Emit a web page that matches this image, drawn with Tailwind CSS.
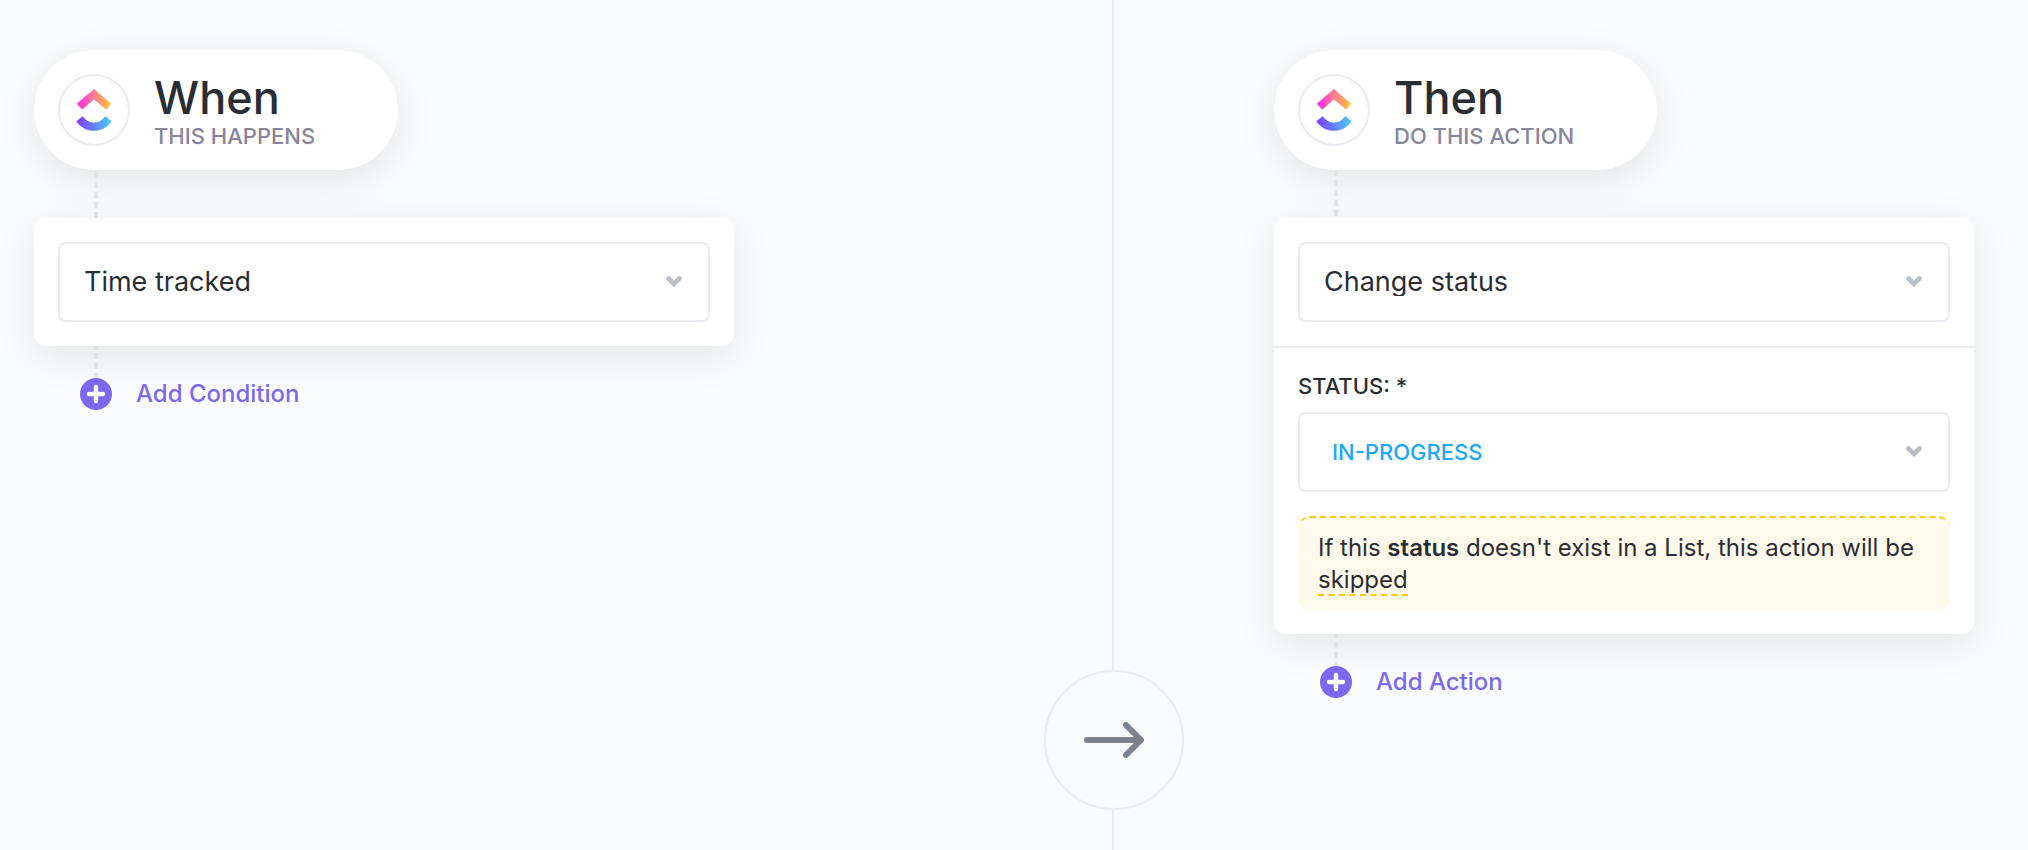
<!DOCTYPE html>
<html lang="en">
<head>
<meta charset="utf-8">
<title>Automation</title>
<script src="https://cdn.jsdelivr.net/npm/@tailwindcss/browser@4"></script>
</head>
<body class="bg-[#fafbfd] font-['Inter',sans-serif] text-[#292d34]">
<svg class="hidden" aria-hidden="true">
  <symbol id="chevron" viewBox="0 0 16 12"><path d="M2.5 2.5 8 8l5.500-5.500" fill="none" stroke="currentColor" stroke-width="4.600" stroke-linecap="round"/></symbol>
  <symbol id="plus" viewBox="0 0 32 32"><circle cx="16" cy="16" r="16" fill="#7b68ee"/><path d="M16 9v14M9 16h14" stroke="#fff" stroke-width="4.400" stroke-linecap="round"/></symbol>
</svg>
<main class="grid min-h-screen grid-cols-[1114fr_914fr]">
  <section class="relative border-r-2 border-[#e9ebf0] pt-[50px] pr-10 pl-[34px]">
    <header class="flex h-[120px] w-fit items-center gap-6 rounded-full bg-white pr-[83px] pl-6 shadow-[0_10px_40px_rgba(0,0,0,0.09)]">
      <span class="grid size-[72px] place-items-center rounded-full border-2 border-[#e9ebf0]">
        <svg class="h-11 w-9" viewBox="0 0 36 44" aria-hidden="true">
          <defs>
            <linearGradient id="roof" x1="0" x2="1"><stop stop-color="#ff22e6"/><stop offset=".5" stop-color="#ff7f96"/><stop offset="1" stop-color="#ffc32e"/></linearGradient>
            <linearGradient id="bowl" x1="0" x2="1"><stop stop-color="#8038ff"/><stop offset="1" stop-color="#49ccf9"/></linearGradient>
          </defs>
          <path d="M18 1 35.200 15.800 30 21.500 18 11.500 6.200 21.500.8 15.800z" fill="url(#roof)"/>
          <path d="M.3 33.200 6.800 28.300C9.800 32.500 13.500 34.700 18 34.700s8.200-2.200 11.200-6.400l6.500 4.900C31.300 39.500 25 42.800 18 42.800S4.700 39.500.3 33.200z" fill="url(#bowl)"/>
        </svg>
      </span>
      <div>
        <h1 class="text-[45px] leading-[52px] font-medium">When</h1>
        <p class="text-[22px] leading-6 font-medium text-[#87859b]">THIS HAPPENS</p>
      </div>
    </header>
    <div class="ml-[60px] h-12 w-1 bg-[linear-gradient(#e2e4eb_6px,transparent_6px)] bg-[length:4px_10px] bg-[position:0_2px]"></div>
    <div class="max-w-[700px] rounded-xl bg-white p-6 shadow-[0_10px_40px_rgba(0,0,0,0.09)]">
      <div class="grid items-center">
        <select aria-label="Trigger" class="col-start-1 row-start-1 w-full appearance-none rounded-lg border-2 border-[#e9ebf0] bg-white px-6 py-6 text-[27px] leading-7"><option>Time tracked</option></select>
        <svg class="pointer-events-none col-start-1 row-start-1 mr-7 h-3 w-4 justify-self-end text-[#b9bec7]" aria-hidden="true"><use href="#chevron"/></svg>
      </div>
    </div>
    <div class="ml-[60px] h-8 w-1 bg-[linear-gradient(#e0e2e8_6px,transparent_6px)] bg-[length:4px_10px] bg-[position:0_-3px]"></div>
    <button class="ml-[46px] flex items-center gap-6 text-2xl leading-8 font-medium text-[#7b68ee]"><svg class="size-8" aria-hidden="true"><use href="#plus"/></svg>Add Condition</button>
    <div class="absolute -right-[72px] bottom-10 grid size-[140px] place-items-center rounded-full border-2 border-[#e9ebf0] bg-[#fafbfd]">
      <svg class="h-9 w-[60px]" viewBox="0 0 60 36" fill="none" stroke="#7c828d" stroke-width="6" stroke-linecap="round" stroke-linejoin="round" aria-hidden="true"><path d="M3 18h54M42 3l15 15-15 15"/></svg>
    </div>
  </section>

  <section class="pt-[50px] pr-[54px] pl-40">
    <header class="flex h-[120px] w-fit items-center gap-6 rounded-full bg-white pr-[83px] pl-6 shadow-[0_10px_40px_rgba(0,0,0,0.09)]">
      <span class="grid size-[72px] place-items-center rounded-full border-2 border-[#e9ebf0]">
        <svg class="h-11 w-9" viewBox="0 0 36 44" aria-hidden="true">
          <path d="M18 1 35.200 15.800 30 21.500 18 11.500 6.200 21.500.8 15.800z" fill="url(#roof)"/>
          <path d="M.3 33.200 6.800 28.300C9.800 32.500 13.500 34.700 18 34.700s8.200-2.200 11.200-6.400l6.500 4.900C31.300 39.500 25 42.800 18 42.800S4.700 39.500.3 33.200z" fill="url(#bowl)"/>
        </svg>
      </span>
      <div>
        <h1 class="text-[45px] leading-[52px] font-medium">Then</h1>
        <p class="text-[22px] leading-6 font-medium text-[#87859b]">DO THIS ACTION</p>
      </div>
    </header>
    <div class="ml-[60px] h-12 w-1 bg-[linear-gradient(#e2e4eb_6px,transparent_6px)] bg-[length:4px_10px]"></div>
    <div class="max-w-[700px] rounded-xl bg-white shadow-[0_10px_40px_rgba(0,0,0,0.09)]">
      <div class="grid items-center p-6">
        <select aria-label="Action" class="col-start-1 row-start-1 w-full appearance-none rounded-lg border-2 border-[#e9ebf0] bg-white px-6 py-6 text-[27px] leading-7"><option>Change status</option></select>
        <svg class="pointer-events-none col-start-1 row-start-1 mr-7 h-3 w-4 justify-self-end text-[#b9bec7]" aria-hidden="true"><use href="#chevron"/></svg>
      </div>
      <div class="border-t-2 border-[#e9ebf0] px-6 pt-6 pb-6">
        <label for="status" class="block pb-3 text-[22px] leading-7 font-medium">STATUS: *</label>
        <div class="grid items-center">
          <select id="status" class="col-start-1 row-start-1 w-full appearance-none rounded-lg border-2 border-[#e9ebf0] bg-white px-8 py-6 text-[22px] leading-7 font-medium text-[#1aa9f8]"><option>IN-PROGRESS</option></select>
          <svg class="pointer-events-none col-start-1 row-start-1 mr-7 h-3 w-4 justify-self-end text-[#b9bec7]" aria-hidden="true"><use href="#chevron"/></svg>
        </div>
        <p class="mt-6 rounded-xl border-t-2 border-dashed border-[#ffc800] bg-[#fff9eb] px-5 py-[14px] text-2xl leading-8">If this <strong class="font-semibold">status</strong> doesn't exist in a List, this action will be <span class="border-b-2 border-dashed border-[#ffc800]">skipped</span></p>
      </div>
    </div>
    <div class="ml-[60px] h-8 w-1 bg-[linear-gradient(#e0e2e8_6px,transparent_6px)] bg-[length:4px_10px] bg-[position:0_-2px]"></div>
    <button class="ml-[46px] flex items-center gap-6 text-2xl leading-8 font-medium text-[#7b68ee]"><svg class="size-8" aria-hidden="true"><use href="#plus"/></svg>Add Action</button>
  </section>
</main>
</body>
</html>
